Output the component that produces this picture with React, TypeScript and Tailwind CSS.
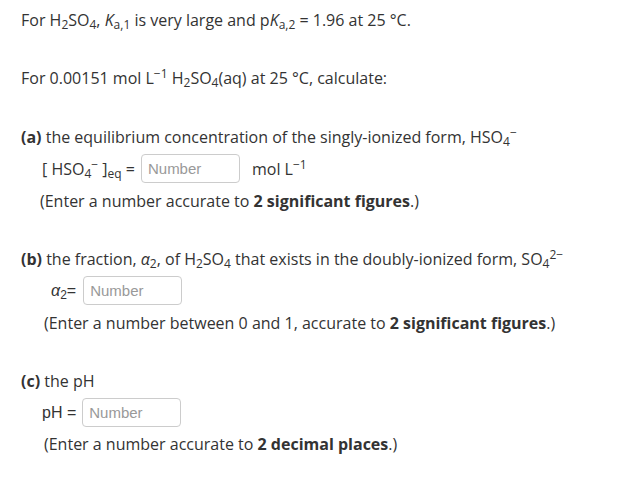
import React from 'react';

const Sub = ({ children }: { children: React.ReactNode }) => (
  <span className="text-[12px] leading-none align-[-3px]">{children}</span>
);
const Sup = ({ children }: { children: React.ReactNode }) => (
  <span className="text-[12px] leading-none align-[6px]">{children}</span>
);

const arial = { fontFamily: '"Liberation Sans", Arial, sans-serif' };

const NumberInput = () => (
  <input
    type="text"
    placeholder="Number"
    className="w-[99px] h-[29px] rounded-[4px] border border-[#cccccc] bg-white px-[6px] text-[15px] text-[#333] placeholder:text-[#999] outline-none"
    style={arial}
  />
);

export default function App() {
  return (
    <div
      className="min-h-screen bg-white text-[#333333] text-[16px] leading-[24px] pl-[21px] pt-[8px] flex flex-col"
      style={{ fontFamily: '"Open Sans", "Noto Sans", sans-serif' }}
    >
      <p>
        For H<Sub>2</Sub>SO<Sub>4</Sub>, <i>K</i>
        <Sub>a,1</Sub> is very large and p<i>K</i>
        <Sub>a,2</Sub> = 1.96 at 25 °C.
      </p>

      <p className="mt-[34px]">
        For 0.00151 mol L<Sup>−1</Sup> H<Sub>2</Sub>SO<Sub>4</Sub>(aq) at 25 °C, calculate:
      </p>

      {/* part a */}
      <section className="mt-[35px] flex flex-col gap-[5px]">
        <p>
          <b>(a)</b> the equilibrium concentration of the singly-ionized form, HSO<Sub>4</Sub>
          <Sup>−</Sup>
        </p>
        <div className="pl-[21px] flex items-center gap-[6px] h-[29px]">
          <span>
            [ HSO<Sub>4</Sub>
            <Sup>−</Sup> ]<Sub>eq</Sub> =
          </span>
          <NumberInput />
          <span className="ml-[6px]">
            mol L<Sup>−1</Sup>
          </span>
        </div>
        <p className="pl-[19px] mt-[1px]">
          (Enter a number accurate to <b>2 significant figures</b>.)
        </p>
      </section>

      {/* part b */}
      <section className="mt-[34px] flex flex-col gap-[5px]">
        <p>
          <b>(b)</b> the fraction, <i>α</i>
          <Sub>2</Sub>, of H<Sub>2</Sub>SO<Sub>4</Sub> that exists in the doubly-ionized form, SO
          <Sub>4</Sub>
          <Sup>2−</Sup>
        </p>
        <div className="pl-[30px] flex items-center gap-[7px] h-[29px]">
          <span style={arial}>
            <i>α</i>
            <Sub>2</Sub>=
          </span>
          <NumberInput />
        </div>
        <p className="pl-[23px] mt-[1px]">
          (Enter a number between 0 and 1, accurate to <b>2 significant figures</b>.)
        </p>
      </section>

      {/* part c */}
      <section className="mt-[34px] flex flex-col gap-[5px]">
        <p>
          <b>(c)</b> the pH
        </p>
        <div className="pl-[21px] flex items-center gap-[6px] h-[29px]">
          <span style={arial}>pH =</span>
          <NumberInput />
        </div>
        <p className="pl-[23px]">
          (Enter a number accurate to <b>2 decimal places</b>.)
        </p>
      </section>
    </div>
  );
}
